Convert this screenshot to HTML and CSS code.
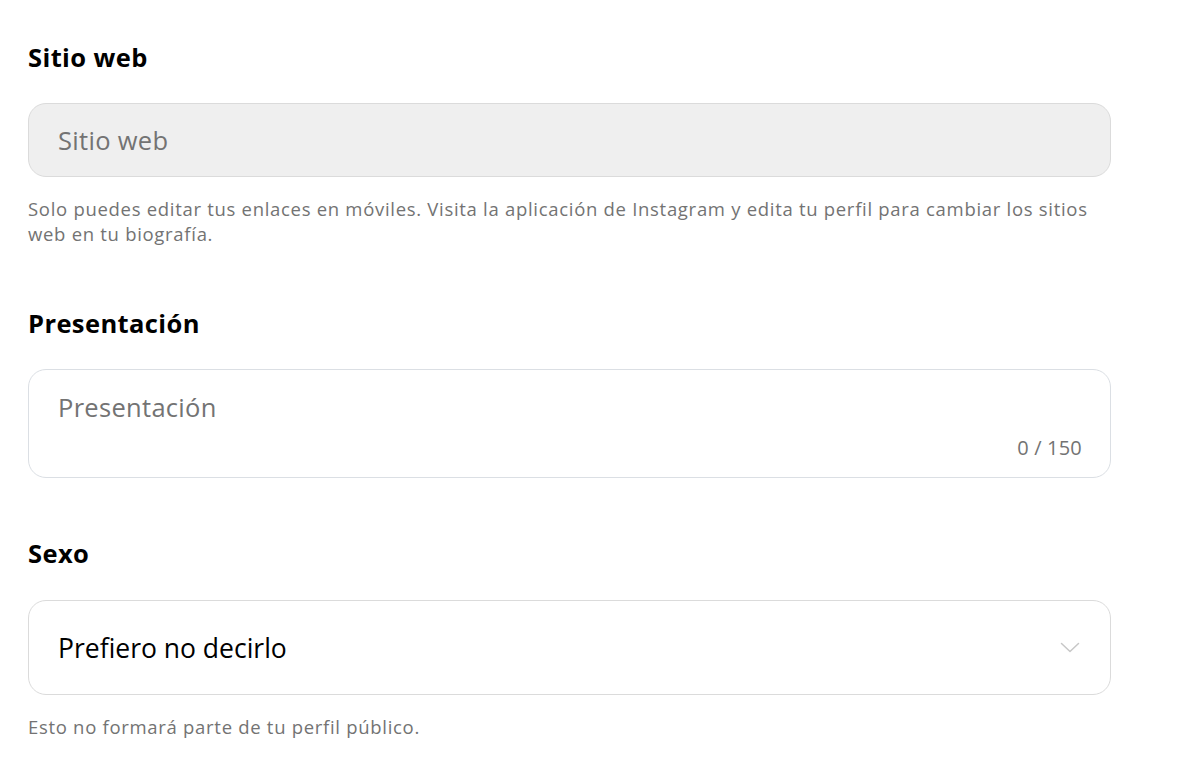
FILE: index.html
```html
<!DOCTYPE html>
<html lang="es">
<head>
<meta charset="utf-8">
<title>Editar perfil</title>
<link rel="stylesheet" href="styles.css">
</head>
<body>
<main class="form">
  <section class="field">
    <label class="label" for="website">Sitio web</label>
    <input class="input input--disabled" id="website" type="text" placeholder="Sitio web" disabled>
    <p class="help help--spaced">Solo puedes editar tus enlaces en móviles. Visita la aplicación de Instagram y edita tu perfil para cambiar los sitios web en tu biografía.</p>
  </section>

  <section class="field">
    <label class="label" for="bio">Presentación</label>
    <div class="textbox">
      <textarea class="textbox__area" id="bio" placeholder="Presentación"></textarea>
      <span class="textbox__count">0 / 150</span>
    </div>
  </section>

  <section class="field">
    <label class="label">Sexo</label>
    <div class="select">
      <span class="select__value">Prefiero no decirlo</span>
      <svg class="select__chevron" width="20" height="11" viewBox="0 0 20 11" aria-hidden="true">
        <polyline points="1.5,1.5 10,9.5 18.5,1.5" fill="none" stroke="#c7c7c7" stroke-width="1.5" stroke-linecap="round" stroke-linejoin="round"/>
      </svg>
    </div>
    <p class="help">Esto no formará parte de tu perfil público.</p>
  </section>
</main>
</body>
</html>
```

FILE: styles.css
```css
* {
  box-sizing: border-box;
}

html, body {
  margin: 0;
  padding: 0;
  background: #ffffff;
}

body {
  font-family: "Open Sans", "Noto Sans", "Liberation Sans", sans-serif;
  color: #000000;
}

.form {
  width: 1083px;
  margin-left: 28px;
  padding-top: 41px;
  display: flex;
  flex-direction: column;
  gap: 59px;
}

.field {
  display: flex;
  flex-direction: column;
}

.label {
  display: block;
  font-size: 25.5px;
  line-height: 32px;
  font-weight: 700;
  letter-spacing: 0.4px;
  color: #000000;
  margin-bottom: 30px;
}

.input {
  display: block;
  width: 100%;
  height: 74px;
  margin: 0;
  padding: 0 29px 0 29px;
  border: 1px solid #dbdbdb;
  border-radius: 18px;
  font-family: inherit;
  font-size: 25.5px;
  line-height: 32px;
  letter-spacing: 0.3px;
  color: #000000;
  outline: none;
}

.input--disabled {
  background: #efefef;
}

.input::placeholder {
  color: #737373;
  opacity: 1;
}

.help {
  margin: 19px 0 0 0;
  font-size: 18.5px;
  line-height: 25px;
  letter-spacing: 0.7px;
  color: #737373;
}

.help--spaced {
  margin-bottom: 2px;
}

.textbox {
  display: flex;
  flex-direction: column;
  height: 109px;
  padding: 21px 28px 17px 29px;
  border: 1px solid #dbdfe4;
  border-radius: 18px;
  background: #ffffff;
}

.textbox__area {
  display: block;
  width: 100%;
  height: 45px;
  margin: 0;
  padding: 0;
  border: 0;
  outline: none;
  resize: none;
  background: transparent;
  font-family: inherit;
  font-size: 25.5px;
  line-height: 32px;
  letter-spacing: 0.3px;
  color: #000000;
  overflow: hidden;
}

.textbox__area::placeholder {
  color: #737373;
  opacity: 1;
}

.textbox__count {
  align-self: flex-end;
  font-size: 20px;
  line-height: 24px;
  letter-spacing: 0.2px;
  color: #737373;
}

.select {
  display: flex;
  align-items: center;
  justify-content: space-between;
  height: 95px;
  margin-top: 1px;
  padding: 0 30px 0 29px;
  border: 1px solid #dbdbdb;
  border-radius: 18px;
  background: #ffffff;
}

.select__value {
  font-size: 26.5px;
  line-height: 32px;
  color: #000000;
}

.select__chevron {
  display: block;
  flex: none;
}
```
